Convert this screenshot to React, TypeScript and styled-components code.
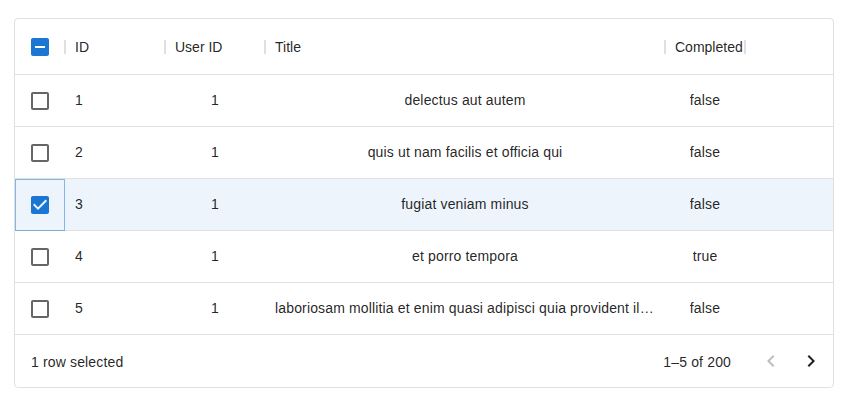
import React from "react";
import styled, { createGlobalStyle, css } from "styled-components";

const GlobalStyle = createGlobalStyle`
  html, body {
    margin: 0;
    padding: 0;
    background: #ffffff;
    font-family: "Liberation Sans", Arial, Helvetica, sans-serif;
  }
  * { box-sizing: border-box; }
`;

const Page = styled.div`
  padding: 18px 0 0 14px;
`;

const Grid = styled.div`
  width: 820px;
  border: 1px solid #e0e0e0;
  border-radius: 4px;
  color: rgba(0, 0, 0, 0.87);
  font-size: 14px;
  letter-spacing: 0.15px;
  overflow: hidden;
`;

const HeaderRow = styled.div`
  display: flex;
  height: 56px;
  border-bottom: 1px solid #e0e0e0;
`;

const HeaderCell = styled.div<{ $w: number; $center?: boolean }>`
  position: relative;
  flex: 0 0 ${(p) => p.$w}px;
  min-width: 0;
  display: flex;
  align-items: center;
  justify-content: ${(p) => (p.$center ? "center" : "flex-start")};
  padding: ${(p) => (p.$center ? "0" : "0 10px")};
  font-weight: 500;
  white-space: nowrap;
  overflow: visible;
  letter-spacing: 0;
  &::after {
    content: "";
    position: absolute;
    right: -1px;
    top: 50%;
    width: 2px;
    height: 14px;
    margin-top: -7px;
    background: #e0e0e0;
  }
`;

const Row = styled.div<{ $selected?: boolean }>`
  display: flex;
  height: 52px;
  border-bottom: 1px solid #e0e0e0;
  ${(p) =>
    p.$selected &&
    css`
      background: rgba(25, 118, 210, 0.08);
    `}
`;

const Cell = styled.div<{ $w: number; $align?: "left" | "center" }>`
  flex: 0 0 ${(p) => p.$w}px;
  min-width: 0;
  padding: 0 10px 2px;
  display: flex;
  align-items: center;
  justify-content: ${(p) => (p.$align === "center" ? "center" : "flex-start")};
  overflow: hidden;
`;

const CellText = styled.span`
  white-space: nowrap;
  overflow: hidden;
  text-overflow: ellipsis;
`;

const CheckCell = styled.div<{ $focused?: boolean }>`
  flex: 0 0 50px;
  display: flex;
  align-items: center;
  justify-content: center;
  margin-bottom: -1px;
  ${(p) =>
    p.$focused &&
    css`
      outline: 1px solid rgba(25, 118, 210, 0.5);
      outline-offset: -1px;
    `}
`;

const CheckIcon = styled.svg<{ $on?: boolean }>`
  width: 24px;
  height: 24px;
  fill: ${(p) => (p.$on ? "#1976d2" : "rgba(0, 0, 0, 0.6)")};
  display: block;
`;

const Footer = styled.div`
  display: flex;
  align-items: center;
  justify-content: space-between;
  height: 52px;
`;

const SelectedCount = styled.div`
  margin-left: 16px;
  padding-top: 2px;
`;

const Pagination = styled.div`
  display: flex;
  align-items: center;
  padding-right: 2px;
`;

const RangeText = styled.span`
  padding-top: 2px;
`;

const Actions = styled.div`
  display: flex;
  margin-left: 20px;
`;

const IconButton = styled.button<{ $disabled?: boolean }>`
  width: 40px;
  height: 40px;
  padding: 8px;
  border: none;
  background: transparent;
  border-radius: 50%;
  display: flex;
  align-items: center;
  justify-content: center;
  cursor: ${(p) => (p.$disabled ? "default" : "pointer")};
  svg {
    width: 24px;
    height: 24px;
    fill: ${(p) => (p.$disabled ? "rgba(0, 0, 0, 0.26)" : "rgba(0, 0, 0, 0.87)")};
  }
`;

const BLANK =
  "M19 5v14H5V5h14m0-2H5c-1.1 0-2 .9-2 2v14c0 1.1.9 2 2 2h14c1.1 0 2-.9 2-2V5c0-1.1-.9-2-2-2z";
const CHECKED =
  "M19 3H5c-1.11 0-2 .9-2 2v14c0 1.1.89 2 2 2h14c1.11 0 2-.9 2-2V5c0-1.1-.89-2-2-2zm-9 14l-5-5 1.41-1.41L10 14.17l7.59-7.59L19 8l-9 9z";
const INDET =
  "M19 3H5c-1.1 0-2 .9-2 2v14c0 1.1.9 2 2 2h14c1.1 0 2-.9 2-2V5c0-1.1-.9-2-2-2zm-2 10H7v-2h10v2z";

const Checkbox = ({ state }: { state: "off" | "on" | "indet" }) => (
  <CheckIcon viewBox="0 0 24 24" $on={state !== "off"}>
    <path d={state === "off" ? BLANK : state === "on" ? CHECKED : INDET} />
  </CheckIcon>
);

const rows = [
  { id: 1, userId: 1, title: "delectus aut autem", completed: false },
  { id: 2, userId: 1, title: "quis ut nam facilis et officia qui", completed: false },
  { id: 3, userId: 1, title: "fugiat veniam minus", completed: false },
  { id: 4, userId: 1, title: "et porro tempora", completed: true },
  {
    id: 5,
    userId: 1,
    title: "laboriosam mollitia et enim quasi adipisci quia provident illum",
    completed: false,
  },
];

const SELECTED = 3;

export default function App() {
  return (
    <>
      <GlobalStyle />
      <Page>
        <Grid>
          <HeaderRow>
            <HeaderCell $w={50} $center>
              <Checkbox state="indet" />
            </HeaderCell>
            <HeaderCell $w={100}>ID</HeaderCell>
            <HeaderCell $w={100}>User ID</HeaderCell>
            <HeaderCell $w={400}>Title</HeaderCell>
            <HeaderCell $w={80}>Completed</HeaderCell>
          </HeaderRow>
          {rows.map((r) => {
            const sel = r.id === SELECTED;
            return (
              <Row key={r.id} $selected={sel}>
                <CheckCell $focused={sel}>
                  <Checkbox state={sel ? "on" : "off"} />
                </CheckCell>
                <Cell $w={100}>
                  <CellText>{r.id}</CellText>
                </Cell>
                <Cell $w={100} $align="center">
                  <CellText>{r.userId}</CellText>
                </Cell>
                <Cell $w={400} $align="center">
                  <CellText>{r.title}</CellText>
                </Cell>
                <Cell $w={80} $align="center">
                  <CellText>{String(r.completed)}</CellText>
                </Cell>
              </Row>
            );
          })}
          <Footer>
            <SelectedCount>1 row selected</SelectedCount>
            <Pagination>
              <RangeText>1–5 of 200</RangeText>
              <Actions>
                <IconButton $disabled aria-label="previous page">
                  <svg viewBox="0 0 24 24">
                    <path d="M15.41 16.59 10.83 12l4.58-4.59L14 6l-6 6 6 6 1.41-1.41z" />
                  </svg>
                </IconButton>
                <IconButton aria-label="next page">
                  <svg viewBox="0 0 24 24">
                    <path d="M8.59 16.59 13.17 12 8.59 7.41 10 6l6 6-6 6-1.41-1.41z" />
                  </svg>
                </IconButton>
              </Actions>
            </Pagination>
          </Footer>
        </Grid>
      </Page>
    </>
  );
}
